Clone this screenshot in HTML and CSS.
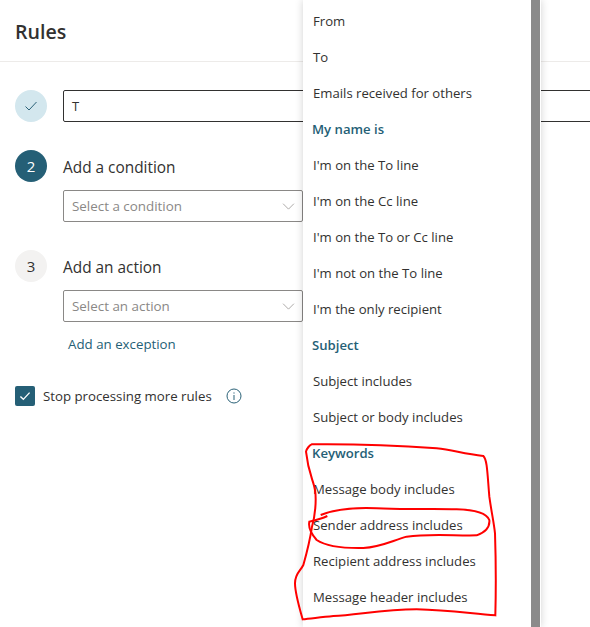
FILE: index.html
```html
<!DOCTYPE html>
<html lang="en">
<head>
<meta charset="utf-8">
<title>Rules</title>
<link rel="stylesheet" href="styles.css">
</head>
<body>
<div class="page">
  <header class="header"><h1 class="title">Rules</h1></header>
  <main class="form">
    <section class="step step-name">
      <div class="badge badge-done">
        <svg class="badge-check" viewBox="0 0 14 12" width="14" height="12"><path d="M1.5 6.5 5 10 12.5 2" fill="none" stroke="#2b6278" stroke-width="1"/></svg>
      </div>
      <div class="name-input">T</div>
    </section>
    <section class="step step-condition">
      <div class="badge badge-active">2</div>
      <div class="step-body">
        <div class="step-title">Add a condition</div>
        <div class="select">
          <span>Select a condition</span>
          <svg class="chevron" viewBox="0 0 14 8" width="13" height="7"><path d="M.8.8 7 7 13.2.8" fill="none" stroke="#a19f9d" stroke-width="1"/></svg>
        </div>
      </div>
    </section>
    <section class="step step-action">
      <div class="badge badge-todo">3</div>
      <div class="step-body">
        <div class="step-title">Add an action</div>
        <div class="select">
          <span>Select an action</span>
          <svg class="chevron" viewBox="0 0 14 8" width="13" height="7"><path d="M.8.8 7 7 13.2.8" fill="none" stroke="#a19f9d" stroke-width="1"/></svg>
        </div>
        <a class="link">Add an exception</a>
      </div>
    </section>
    <div class="stop-row">
      <span class="checkbox">
        <svg viewBox="0 0 14 12" width="12" height="10"><path d="M1.5 6.5 5 10 12.5 2" fill="none" stroke="#fff" stroke-width="1.6"/></svg>
      </span>
      <span class="stop-label">Stop processing more rules</span>
      <svg class="info" viewBox="0 0 16 16" width="16" height="16"><circle cx="8" cy="8" r="7" fill="none" stroke="#2b6278" stroke-width="1"/><rect x="7.5" y="7" width="1" height="5" fill="#2b6278"/><rect x="7.5" y="4.4" width="1" height="1.2" fill="#2b6278"/></svg>
    </div>
  </main>
  <aside class="menu">
    <ul class="menu-list">
      <li class="menu-item">From</li>
      <li class="menu-item">To</li>
      <li class="menu-item">Emails received for others</li>
      <li class="menu-head">My name is</li>
      <li class="menu-item">I'm on the To line</li>
      <li class="menu-item">I'm on the Cc line</li>
      <li class="menu-item">I'm on the To or Cc line</li>
      <li class="menu-item">I'm not on the To line</li>
      <li class="menu-item">I'm the only recipient</li>
      <li class="menu-head">Subject</li>
      <li class="menu-item">Subject includes</li>
      <li class="menu-item">Subject or body includes</li>
      <li class="menu-head">Keywords</li>
      <li class="menu-item">Message body includes</li>
      <li class="menu-item">Sender address includes</li>
      <li class="menu-item">Recipient address includes</li>
      <li class="menu-item">Message header includes</li>
    </ul>
    <div class="scrollbar"></div>
  </aside>
  <svg class="scribble" viewBox="0 0 780 591" width="260" height="197">
    <path d="M65 43C150 42 300 45 440 55C490 60 520 72 580 78C592 90 592 130 598 200C605 250 612 280 615 310C618 400 618 480 616 556C550 552 480 540 380 538C280 538 200 555 130 558C90 562 60 566 38 568C30 540 15 490 15 460C15 430 30 425 40 405C50 370 60 330 66 290C75 260 80 210 75 180C70 150 55 130 48 65C50 55 60 45 65 43Z"/>
    <path d="M112 258C90 268 70 272 58 275C55 290 62 310 80 330C110 350 170 355 220 354C270 352 300 335 350 320C420 310 500 318 560 316C590 305 600 290 598 270C590 250 560 240 500 238C420 235 340 240 260 235C190 232 130 240 92 255"/>
  </svg>
</div>
</body>
</html>
```

FILE: styles.css
```css
* { box-sizing: border-box; }
html, body { margin: 0; padding: 0; }
body {
  font-family: "Open Sans", "Noto Sans", sans-serif;
  color: #323130;
  background: #fff;
}
.page {
  position: relative;
  width: 590px;
  height: 627px;
  overflow: hidden;
}
.header {
  height: 62px;
  padding: 19px 0 0 15px;
  border-bottom: 1px solid #edebe9;
}
.title {
  margin: 0;
  font-size: 19.6px;
  line-height: 26px;
  font-weight: 600;
}
.form {
  padding: 28px 0 0 15px;
}
.step {
  display: flex;
  gap: 16px;
}
.step-condition { margin-top: 28px; }
.step-action { margin-top: 28px; }
.badge {
  flex: none;
  width: 32px;
  height: 32px;
  border-radius: 50%;
  display: flex;
  align-items: center;
  justify-content: center;
  font-size: 15px;
}
.badge-done { background: #d3e7ee; }
.badge-active { background: #255f76; color: #fff; }
.badge-todo { background: #f3f2f1; }
.name-input {
  flex: none;
  width: 600px;
  height: 32px;
  padding: 0 8px;
  border: 1px solid #323130;
  border-radius: 2px;
  font-size: 13px;
  line-height: 30px;
}
.step-body { flex: none; width: 240px; }
.step-title {
  font-size: 15.4px;
  line-height: 36px;
  height: 40px;
}
.select {
  height: 32px;
  padding: 0 7px 0 8px;
  border: 1px solid #8a8886;
  border-radius: 2px;
  display: flex;
  align-items: center;
  justify-content: space-between;
  font-size: 13.4px;
  color: #8a8886;
}
.link {
  display: block;
  margin: 6px 0 0 5px;
  font-size: 13.3px;
  line-height: 32px;
  color: #255f76;
}
.stop-row {
  display: flex;
  align-items: center;
  margin-top: 26px;
  height: 20px;
}
.checkbox {
  width: 20px;
  height: 20px;
  background: #255f76;
  border-radius: 2px;
  display: flex;
  align-items: center;
  justify-content: center;
}
.stop-label {
  margin-left: 8px;
  font-size: 13.25px;
}
.info { margin-left: 14px; }
.menu {
  position: absolute;
  left: 303px;
  top: 0;
  width: 238px;
  height: 627px;
  background: #fff;
  box-shadow: 0 0 8px rgba(0,0,0,.18);
  display: flex;
}
.menu-list {
  list-style: none;
  margin: 0;
  padding: 3px 0 0 0;
  flex: 1;
}
.menu-item, .menu-head {
  height: 36px;
  line-height: 36px;
  padding-left: 10px;
  font-size: 13.15px;
}
.menu-head {
  padding-left: 9px;
  font-weight: 600;
  color: #255f76;
}
.scrollbar {
  flex: none;
  width: 9px;
  margin-right: 1px;
  background: #8a8a8a;
}
.scribble {
  position: absolute;
  left: 290px;
  top: 430px;
  fill: none;
  stroke: #f00;
  stroke-width: 6;
}
```
